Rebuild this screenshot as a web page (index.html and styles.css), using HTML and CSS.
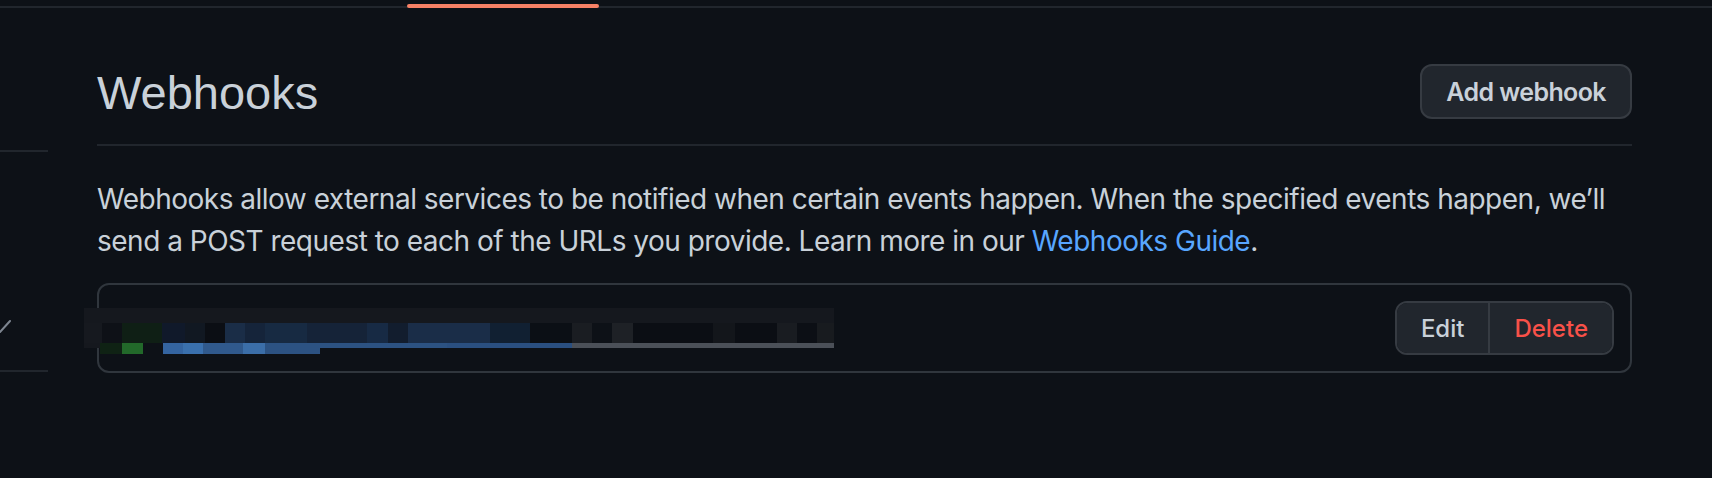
FILE: index.html
```html
<!DOCTYPE html>
<html lang="en">
<head>
	<meta charset="UTF-8">
	<title>Webhooks</title>
	<link rel="stylesheet" href="styles.css">
</head>
<body>

	<div class="topnav">
		<div class="topnav-selected"></div>
	</div>

	<div class="layout">
		<div class="sidebar">
			<div class="sidebar-rule"></div>
			<svg class="sidebar-check" width="12" height="13" viewBox="0 0 12 13">
				<path d="M0 12 L10 1" stroke="#7d8590" stroke-width="2" stroke-linecap="round" fill="none" />
			</svg>
			<div class="sidebar-rule sidebar-rule-bottom"></div>
		</div>

		<div class="main">
			<div class="subhead">
				<h2 class="subhead-heading">Webhooks</h2>
				<button class="btn btn-add">Add webhook</button>
			</div>

			<p class="intro">
				Webhooks allow external services to be notified when certain events happen. When the specified events happen, we’ll
				send a POST request to each of the URLs you provide. Learn more in our <a href="#" class="link">Webhooks Guide</a>.
			</p>

			<div class="hook-box">
				<div class="hook-url"></div>
				<div class="btn-group">
					<button class="btn btn-group-item">Edit</button>
					<button class="btn btn-group-item btn-danger">Delete</button>
				</div>
			</div>
		</div>
	</div>

</body>
</html>
```

FILE: styles.css
```css
body {
	margin: 0;
	background-color: #0d1117;
	color: #c9d1d9;
	font-family: Inter, "Noto Sans", sans-serif;
}

/* tab bar on top */
.topnav {
	display: flex;
	align-items: flex-end;
	height: 8px;
	background: linear-gradient(#21262d, #21262d) 0 6px / 100% 2px no-repeat;
}
.topnav-selected {
	margin-left: 407px;
	width: 192px;
	height: 4px;
	border-radius: 2px;
	background-color: #f78166;
}

.layout {
	display: flex;
}

/* left menu, cut off */
.sidebar {
	display: flex;
	flex-direction: column;
	width: 48px;
}
.sidebar-rule {
	margin-top: 142px;
	height: 2px;
	background-color: #21262d;
}
.sidebar-check {
	display: block;
	margin-top: 168px;
}
.sidebar-rule-bottom {
	margin-top: 37px;
}

.main {
	margin-left: 49px;
	width: 1535px;
}

.subhead {
	display: flex;
	align-items: center;
	justify-content: space-between;
	padding-top: 55px;
	padding-bottom: 21px;
	border-bottom: 2px solid #21262d;
}
.subhead-heading {
	margin: 0;
	font-family: "Liberation Sans", Arial, sans-serif;
	font-size: 47px;
	font-weight: 400;
	line-height: 60px;
	color: #c9d1d9;
}

.btn {
	font-family: Inter, "Noto Sans", sans-serif;
	color: #c9d1d9;
	background-color: #21262d;
	border: 2px solid #363b42;
	cursor: pointer;
}
.btn-add {
	height: 55px;
	margin-bottom: 3px;
	padding: 0 24px;
	border-radius: 12px;
	font-size: 25px;
	font-weight: 600;
	letter-spacing: -0.6px;
}

.intro {
	margin: 32px 0 21px;
	font-size: 28px;
	line-height: 42px;
	letter-spacing: -0.5px;
}
.link {
	color: #58a6ff;
	text-decoration: none;
}

.hook-box {
	display: flex;
	align-items: center;
	justify-content: space-between;
	padding: 16px;
	border: 2px solid #30363d;
	border-radius: 12px;
}

/* pixelated url */
.hook-url {
	margin-left: -31px;
	margin-top: 6px;
	width: 750px;
	height: 46px;
	background:
		linear-gradient(90deg,
			#16191f 0 18px, #0e1117 18px 38px, #0f1f15 38px 78px, #10192a 78px 101px,
			#111822 101px 121px, #0b0e14 121px 141px, #1a2d47 141px 161px, #15243a 161px 181px,
			#172a42 181px 223px, #152338 223px 283px, #172a44 283px 304px, #121d2e 304px 324px,
			#1a2d48 324px 406px, #112032 406px 446px, #0b0f15 446px 488px, #1a1d22 488px 508px,
			#0d1117 508px 528px, #1e2126 528px 549px, #0b0e14 549px 629px, #13161b 629px 651px,
			#0b0e14 651px 693px, #191c21 693px 713px, #0c0f15 713px 733px, #181b1f 733px 750px)
			0 15px / 100% 20px no-repeat,
		linear-gradient(90deg,
			#15181e 0 16px, #0f2214 16px 38px, #22692a 38px 59px, #0d1117 59px 79px,
			#3464a0 79px 99px, #3a70ad 99px 119px, #30598c 119px 159px, #3b6ea8 159px 181px,
			#2c5282 181px 363px, #2a4f80 363px 488px, #4b5058 488px 750px)
			0 35px / 100% 5px no-repeat,
		linear-gradient(90deg,
			transparent 0 16px, #0f2214 16px 38px, #22692a 38px 59px, transparent 59px 79px,
			#3464a0 79px 99px, #3a70ad 99px 119px, #30598c 119px 159px, #3b6ea8 159px 181px,
			#2c5282 181px 236px)
			0 40px / 236px 6px no-repeat,
		linear-gradient(#15181e, #15181e) 0 0 / 100% 15px no-repeat;
}

.btn-group {
	display: flex;
	border: 2px solid #363b42;
	border-radius: 12px;
	overflow: hidden;
}
.btn-group-item {
	height: 50px;
	padding: 0 24px;
	border: 0;
	font-size: 24px;
	font-weight: 500;
}
.btn-danger {
	color: #f85149;
	border-left: 2px solid #363b42;
}
```
